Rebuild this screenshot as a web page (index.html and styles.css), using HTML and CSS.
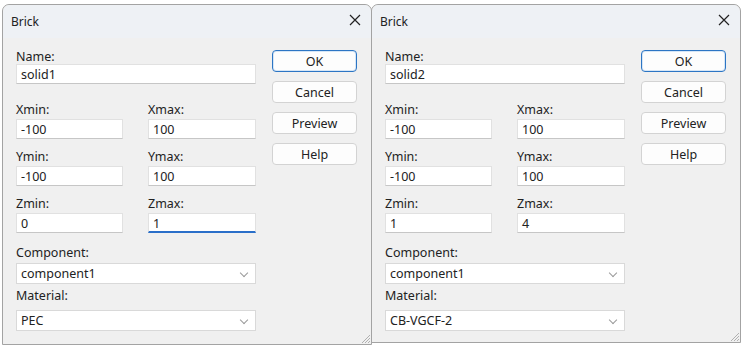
FILE: index.html
```html
<!DOCTYPE html>
<html lang="en">
<head>
    <meta charset="UTF-8">
    <title>Brick</title>
    <link rel="stylesheet" href="styles.css">
</head>
<body>

    <div class="desk">

        <!-- first dialog -->
        <div class="dialog">
            <div class="titlebar">
                <span class="title">Brick</span>
                <svg class="close" width="12" height="12" viewBox="0 0 12 12"><path d="M1 1 L11 11 M11 1 L1 11" stroke="#222" stroke-width="1.2" fill="none"/></svg>
            </div>
            <div class="body">
                <div class="form">
                    <label class="lbl name-lbl">Name:</label>
                    <div class="input wide">solid1</div>

                    <div class="pairs">
                        <div class="field">
                            <label class="lbl">Xmin:</label>
                            <div class="input">-100</div>
                        </div>
                        <div class="field">
                            <label class="lbl">Xmax:</label>
                            <div class="input">100</div>
                        </div>
                        <div class="field">
                            <label class="lbl">Ymin:</label>
                            <div class="input">-100</div>
                        </div>
                        <div class="field">
                            <label class="lbl">Ymax:</label>
                            <div class="input">100</div>
                        </div>
                        <div class="field">
                            <label class="lbl">Zmin:</label>
                            <div class="input">0</div>
                        </div>
                        <div class="field">
                            <label class="lbl">Zmax:</label>
                            <div class="input focused">1</div>
                        </div>
                    </div>

                    <label class="lbl combo-lbl">Component:</label>
                    <div class="select">component1<span class="chev"></span></div>
                    <label class="lbl combo-lbl mat-lbl">Material:</label>
                    <div class="select mat">PEC<span class="chev"></span></div>
                </div>
                <div class="buttons">
                    <button class="btn default">OK</button>
                    <button class="btn">Cancel</button>
                    <button class="btn">Preview</button>
                    <button class="btn">Help</button>
                </div>
            </div>
            <svg class="grip" width="12" height="12" viewBox="0 0 12 12"><path d="M11 3 L3 11 M11 6 L6 11 M11 9 L9 11" stroke="#b0b0b0" stroke-width="1" fill="none"/></svg>
        </div>

        <!-- second dialog -->
        <div class="dialog second">
            <div class="titlebar">
                <span class="title">Brick</span>
                <svg class="close" width="12" height="12" viewBox="0 0 12 12"><path d="M1 1 L11 11 M11 1 L1 11" stroke="#222" stroke-width="1.2" fill="none"/></svg>
            </div>
            <div class="body">
                <div class="form">
                    <label class="lbl name-lbl">Name:</label>
                    <div class="input wide">solid2</div>

                    <div class="pairs">
                        <div class="field">
                            <label class="lbl">Xmin:</label>
                            <div class="input">-100</div>
                        </div>
                        <div class="field">
                            <label class="lbl">Xmax:</label>
                            <div class="input">100</div>
                        </div>
                        <div class="field">
                            <label class="lbl">Ymin:</label>
                            <div class="input">-100</div>
                        </div>
                        <div class="field">
                            <label class="lbl">Ymax:</label>
                            <div class="input">100</div>
                        </div>
                        <div class="field">
                            <label class="lbl">Zmin:</label>
                            <div class="input">1</div>
                        </div>
                        <div class="field">
                            <label class="lbl">Zmax:</label>
                            <div class="input">4</div>
                        </div>
                    </div>

                    <label class="lbl combo-lbl">Component:</label>
                    <div class="select">component1<span class="chev"></span></div>
                    <label class="lbl combo-lbl mat-lbl">Material:</label>
                    <div class="select mat">CB-VGCF-2<span class="chev"></span></div>
                </div>
                <div class="buttons">
                    <button class="btn default">OK</button>
                    <button class="btn">Cancel</button>
                    <button class="btn">Preview</button>
                    <button class="btn">Help</button>
                </div>
            </div>
            <svg class="grip" width="12" height="12" viewBox="0 0 12 12"><path d="M11 3 L3 11 M11 6 L6 11 M11 9 L9 11" stroke="#b0b0b0" stroke-width="1" fill="none"/></svg>
        </div>

    </div>

</body>
</html>
```

FILE: styles.css
```css
body {
    margin: 0;
    background-color: #fff;
    font-family: "Noto Sans", Arial, sans-serif;
    font-size: 12px;
    color: #222;
}

.desk {
    display: flex;
    padding: 4px 0 0 2px;
}

.dialog {
    position: relative;
    width: 368px;
    height: 339px;
    background-color: #f0f0f0;
    border: 1px solid #a3a3a3;
    border-radius: 7px 7px 0 0;
}

.dialog.second {
    width: 368px;
    height: 337px;
    margin-left: -1px;
}

.titlebar {
    display: flex;
    align-items: center;
    justify-content: space-between;
    height: 33px;
    padding: 0 10px 0 8px;
    background-color: #eef1f5;
    border-radius: 7px 7px 0 0;
}

.title {
    font-size: 12px;
    margin-top: -1px;
}

.close {
    margin-top: -3px;
}

.body {
    display: flex;
    gap: 16px;
    padding: 0 0 0 13px;
}

.form {
    width: 240px;
    display: flex;
    flex-direction: column;
}

.lbl {
    display: block;
    height: 14px;
    line-height: 14px;
    font-size: 12.5px;
}

.name-lbl {
    margin-top: 12px;
}

.input {
    height: 20px;
    line-height: 20px;
    box-sizing: border-box;
    padding: 0 4px;
    background-color: #fff;
    border: 1px solid #e1e1e1;
    border-bottom-color: #c6c6c6;
    font-size: 12.5px;
}

.input.focused {
    border-bottom: 2px solid #2a6fc9;
}

.pairs {
    display: grid;
    grid-template-columns: 107px 108px;
    column-gap: 25px;
    row-gap: 11px;
    margin-top: 19px;
}

.field .lbl {
    margin-bottom: 2px;
}

.combo-lbl {
    margin-top: 13px;
    margin-bottom: 3px;
}

.mat-lbl {
    margin-top: 5px;
    margin-bottom: 7px;
}

.select {
    position: relative;
    height: 21px;
    line-height: 20px;
    box-sizing: border-box;
    padding: 0 4px;
    background-color: #fff;
    border: 1px solid #d9d9d9;
    font-size: 12.5px;
}

.chev {
    position: absolute;
    right: 8px;
    top: 6px;
    width: 5px;
    height: 5px;
    border-right: 1px solid #9a9a9a;
    border-bottom: 1px solid #9a9a9a;
    transform: rotate(45deg);
}

.buttons {
    display: flex;
    flex-direction: column;
    gap: 9px;
    padding-top: 12px;
}

.btn {
    width: 85px;
    height: 22px;
    padding: 0;
    background-color: #fdfdfd;
    border: 1px solid #d3d3d3;
    border-radius: 4px;
    font-family: "Noto Sans", Arial, sans-serif;
    font-size: 12.5px;
    color: #222;
}

.btn.default {
    border: 1px solid #2c75c4;
    box-shadow: inset 0 0 0 1px #d6e6f6;
}

.grip {
    position: absolute;
    right: 0;
    bottom: 0;
}
```
